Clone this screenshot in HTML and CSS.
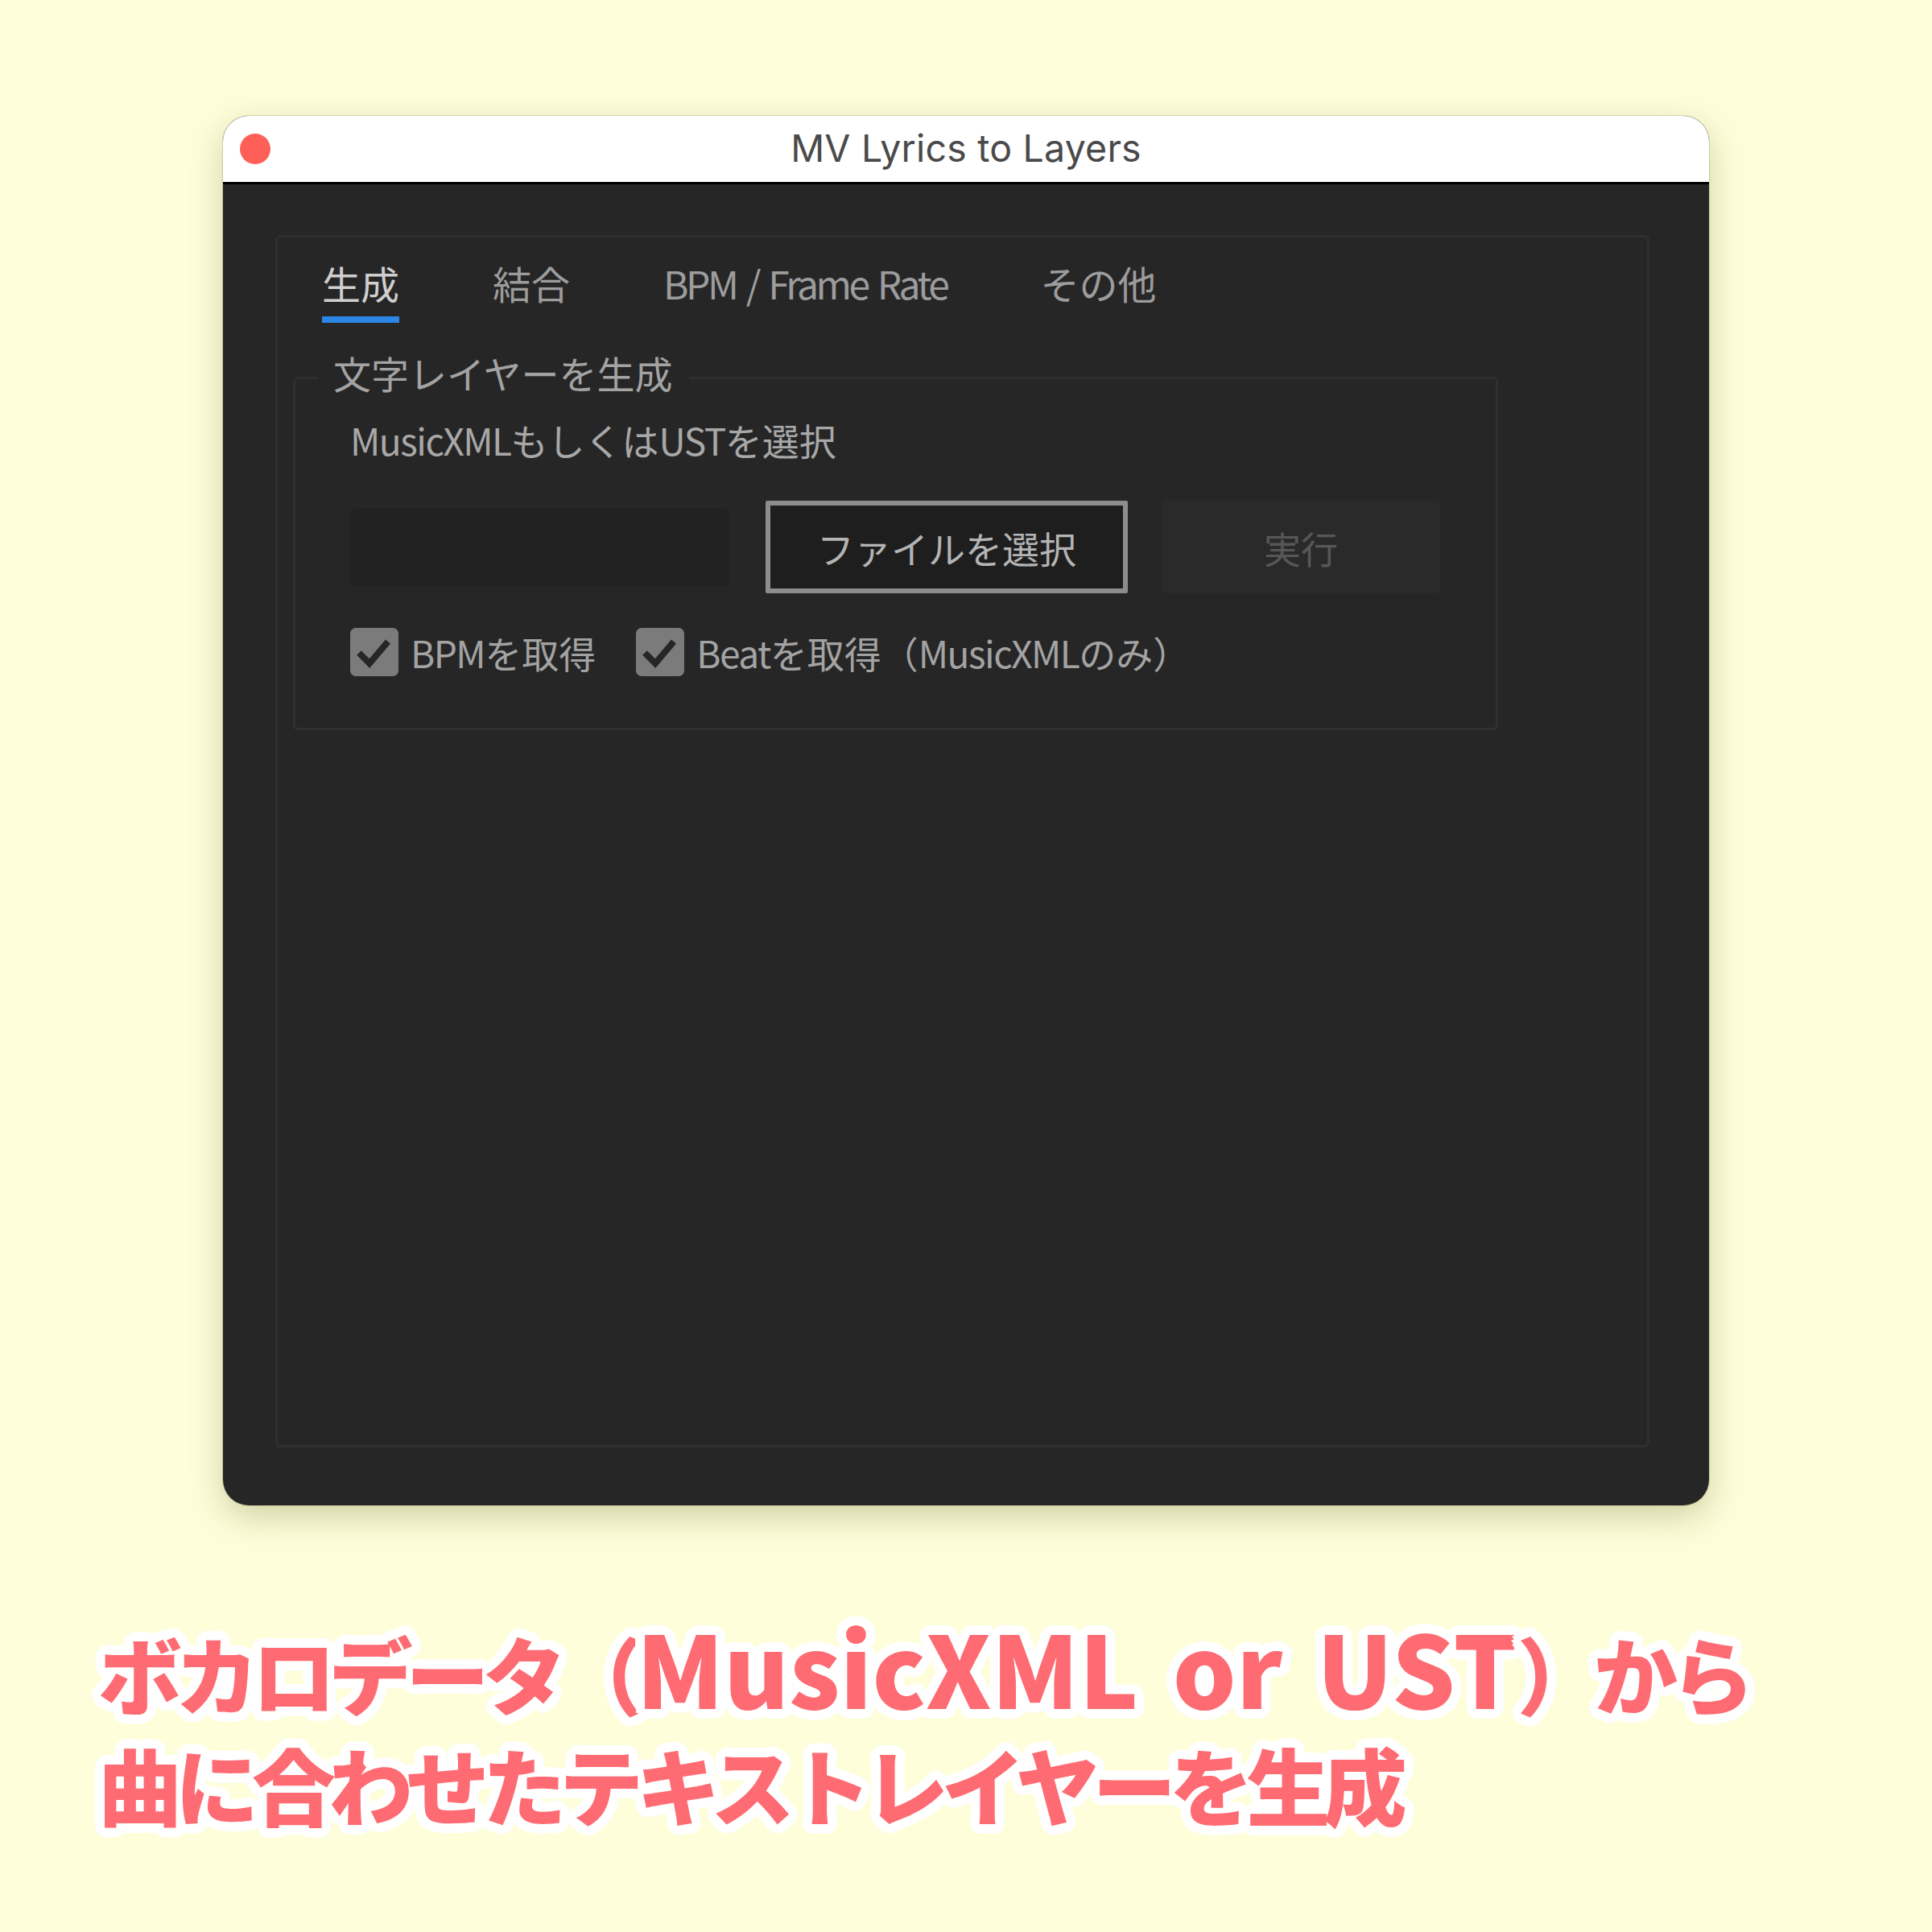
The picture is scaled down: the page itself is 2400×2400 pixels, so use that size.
FILE: index.html
```html
<!DOCTYPE html>
<html lang="ja">
<head>
<meta charset="utf-8">
<title>MV Lyrics to Layers</title>
<link rel="stylesheet" href="styles.css">
</head>
<body>
<div class="stage">
  <div class="window">
    <div class="titlebar">
      <span class="close"></span>
      <span class="title">MV Lyrics to Layers</span>
      <span class="spacer"></span>
    </div>
    <div class="body">
      <div class="panel">
        <div class="tabs">
          <div class="tab active">生成</div>
          <div class="tab">結合</div>
          <div class="tab tab-latin">BPM / Frame Rate</div>
          <div class="tab">その他</div>
        </div>
        <fieldset class="group">
          <legend class="legend">文字レイヤーを生成</legend>
          <div class="group-body">
            <div class="label"><span class="lat">MusicXML</span>もしくは<span class="lat">UST</span>を選択</div>
            <div class="row">
              <div class="input"></div>
              <button class="btn-file" type="button">ファイルを選択</button>
              <button class="btn-run" type="button" disabled>実行</button>
            </div>
            <div class="checks">
              <label class="check">
                <span class="box"><svg viewBox="0 0 60 60" width="60" height="60"><path d="M11 31 L24 44 L47 17" fill="none" stroke="#262626" stroke-width="8" stroke-linejoin="miter"/></svg></span>
                <span class="check-text"><span class="lat">BPM</span>を取得</span>
              </label>
              <label class="check">
                <span class="box"><svg viewBox="0 0 60 60" width="60" height="60"><path d="M11 31 L24 44 L47 17" fill="none" stroke="#262626" stroke-width="8" stroke-linejoin="miter"/></svg></span>
                <span class="check-text"><span class="lat">Beat</span>を取得（<span class="lat">MusicXML</span>のみ）</span>
              </label>
            </div>
          </div>
        </fieldset>
      </div>
    </div>
  </div>
  <div class="caption">
    <div class="caption-line">ボカロデータ（<span class="cap-latin">MusicXML or UST</span>）から</div>
    <div class="caption-line">曲に合わせたテキストレイヤーを生成</div>
  </div>
</div>
</body>
</html>
```
FILE: styles.css
```css
html, body {
  margin: 0;
  padding: 0;
}
body {
  background: #fefedb;
  width: 2400px;
  height: 2400px;
  overflow: hidden;
  font-family: "Noto Sans CJK JP", "Noto Sans", sans-serif;
}
.stage {
  padding: 144px 0 0 277px;
}
.window {
  width: 1846px;
  height: 1726px;
  border-radius: 32px;
  overflow: hidden;
  display: flex;
  flex-direction: column;
  background: #262626;
  box-shadow: 0 14px 44px rgba(90, 90, 20, 0.28), 0 0 0 1px rgba(120, 120, 80, 0.25);
}
.titlebar {
  height: 82px;
  background: #ffffff;
  border-bottom: 3px solid #000000;
  display: grid;
  grid-template-columns: 1fr auto 1fr;
  align-items: center;
}
.close {
  width: 38px;
  height: 38px;
  border-radius: 50%;
  background: #fe5f57;
  margin-left: 21px;
  justify-self: start;
}
.title {
  font-family: Inter, Roboto, "Liberation Sans", sans-serif;
  font-size: 46.5px;
  letter-spacing: 0.2px;
  color: #4a4a4a;
  line-height: 82px;
  position: relative;
  top: -1px;
}
.body {
  flex: 1;
  display: flex;
  padding: 63px 74px 72px 65px;
}
.panel {
  flex: 1;
  border: 3px solid #2f2f2f;
  border-radius: 6px;
}
.tabs {
  display: flex;
  gap: 116px;
  padding: 28px 0 0 55px;
}
.tab {
  font-size: 48px;
  line-height: 56px;
  color: #9c9c9c;
  padding-bottom: 14px;
  border-bottom: 8px solid transparent;
}
.tab-latin {
  letter-spacing: -3.5px;
  word-spacing: 5px;
}
.tab.active {
  color: #cfcfcf;
  border-bottom-color: #2b86e6;
}
.group {
  margin: 40px 0 0 19px;
  width: 1491px;
  padding: 0;
  border: 3px solid #2f2f2f;
  border-radius: 6px;
  min-width: 0;
}
.legend {
  margin-left: 27px;
  padding: 0 20px;
  font-size: 47px;
  line-height: 56px;
  color: #a3a3a3;
  position: relative;
  top: -6px;
}
.group-body {
  padding: 25px 0 64px 68px;
}
.label {
  font-size: 46px;
  line-height: 56px;
  color: #a8a8a8;
  position: relative;
  top: -4px;
}
.lat {
  letter-spacing: -1.5px;
}
.row {
  display: flex;
  align-items: center;
  margin-top: 44px;
  height: 115px;
}
.input {
  width: 471px;
  height: 98px;
  background: #222222;
  border-radius: 6px;
}
.btn-file {
  margin-left: 45px;
  width: 450px;
  height: 115px;
  box-sizing: border-box;
  border: 6px solid #8d8d8d;
  border-radius: 2px;
  background: #1e1e1e;
  color: #b4b4b4;
  font-family: "Noto Sans CJK JP", sans-serif;
  font-size: 46px;
  padding: 0;
}
.btn-run {
  margin-left: 42px;
  width: 346px;
  height: 115px;
  border: none;
  border-radius: 4px;
  background: #2a2a2a;
  color: #575757;
  font-family: "Noto Sans CJK JP", sans-serif;
  font-size: 46px;
  padding: 0;
}
.checks {
  display: flex;
  align-items: center;
  gap: 50px;
  margin-top: 43px;
}
.check {
  display: flex;
  align-items: center;
  gap: 15px;
}
.box {
  width: 60px;
  height: 60px;
  border-radius: 7px;
  background: #7b7b7b;
  display: block;
}
.box svg {
  display: block;
}
.check-text {
  font-size: 46px;
  line-height: 60px;
  color: #a3a3a3;
}
.caption {
  margin-top: 130px;
  margin-left: -155px;
  font-size: 104px;
  font-weight: 900;
  line-height: 138px;
  letter-spacing: -8.5px;
  color: #fe6b73;
  white-space: nowrap;
  text-shadow:
    12px 0 0 #fff, 11.1px 4.6px 0 #fff, 8.5px 8.5px 0 #fff, 4.6px 11.1px 0 #fff,
    0 12px 0 #fff, -4.6px 11.1px 0 #fff, -8.5px 8.5px 0 #fff, -11.1px 4.6px 0 #fff,
    -12px 0 0 #fff, -11.1px -4.6px 0 #fff, -8.5px -8.5px 0 #fff, -4.6px -11.1px 0 #fff,
    0 -12px 0 #fff, 4.6px -11.1px 0 #fff, 8.5px -8.5px 0 #fff, 11.1px -4.6px 0 #fff,
    6px 0 0 #fff, 0 6px 0 #fff, -6px 0 0 #fff, 0 -6px 0 #fff,
    4px 4px 0 #fff, -4px 4px 0 #fff, 4px -4px 0 #fff, -4px -4px 0 #fff;
}
.cap-latin {
  font-size: 124px;
  letter-spacing: 0;
  word-spacing: 14px;
}
```
